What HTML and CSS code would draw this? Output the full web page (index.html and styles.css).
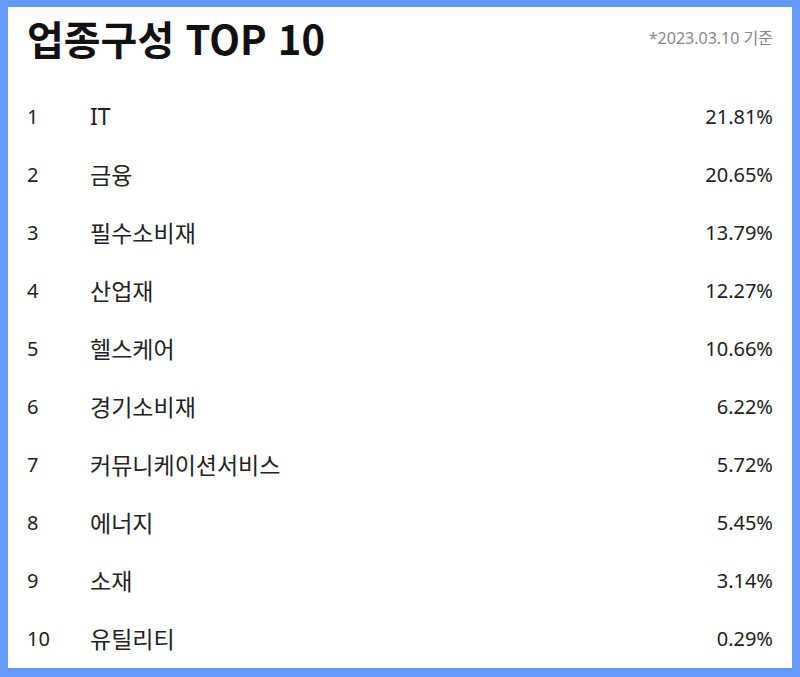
FILE: index.html
```html
<!DOCTYPE html>
<html lang="ko">
<head>
<meta charset="utf-8">
<link rel="stylesheet" href="styles.css">
</head>
<body>
<div class="card">
  <div class="header">
    <h1 class="title">업종구성 TOP 10</h1>
    <span class="date">*2023.03.10 기준</span>
  </div>
  <ul class="list">
    <li class="row"><span class="rank">1</span><span class="name">IT</span><span class="pct">21.81%</span></li>
    <li class="row"><span class="rank">2</span><span class="name">금융</span><span class="pct">20.65%</span></li>
    <li class="row"><span class="rank">3</span><span class="name">필수소비재</span><span class="pct">13.79%</span></li>
    <li class="row"><span class="rank">4</span><span class="name">산업재</span><span class="pct">12.27%</span></li>
    <li class="row"><span class="rank">5</span><span class="name">헬스케어</span><span class="pct">10.66%</span></li>
    <li class="row"><span class="rank">6</span><span class="name">경기소비재</span><span class="pct">6.22%</span></li>
    <li class="row"><span class="rank">7</span><span class="name">커뮤니케이션서비스</span><span class="pct">5.72%</span></li>
    <li class="row"><span class="rank">8</span><span class="name">에너지</span><span class="pct">5.45%</span></li>
    <li class="row"><span class="rank">9</span><span class="name">소재</span><span class="pct">3.14%</span></li>
    <li class="row"><span class="rank">10</span><span class="name">유틸리티</span><span class="pct">0.29%</span></li>
  </ul>
</div>
</body>
</html>
```
FILE: styles.css
```css
html, body {
  margin: 0;
  padding: 0;
  background: #6699ff;
}
body {
  font-family: "Noto Sans", "Noto Sans CJK KR", sans-serif;
  color: #222;
}
.card {
  box-sizing: border-box;
  width: 800px;
  height: 677px;
  border: 8px solid #6699ff;
  border-top-width: 7px;
  border-bottom-width: 9px;
  background: #fff;
  padding: 0 19px 0 19px;
  display: flex;
  flex-direction: column;
}
.header {
  height: 80px;
  display: flex;
  justify-content: space-between;
  align-items: flex-start;
  padding-top: 3px;
  box-sizing: border-box;
}
.title {
  margin: 0;
  font-family: "Noto Sans CJK KR", sans-serif;
  font-size: 40px;
  font-weight: 700;
  line-height: 56px;
  color: #111;
}
.date {
  font-size: 16px;
  line-height: 56px;
  color: #888;
  font-family: "Noto Sans", "Noto Sans CJK KR", sans-serif;
}
.list {
  list-style: none;
  margin: 0;
  padding: 0;
}
.row {
  display: flex;
  align-items: center;
  height: 58px;
  font-size: 20px;
  color: #222;
}
.rank {
  width: 63px;
  flex: none;
}
.name {
  flex: 1;
  font-size: 23px;
}
.pct {
  text-align: right;
}
```
